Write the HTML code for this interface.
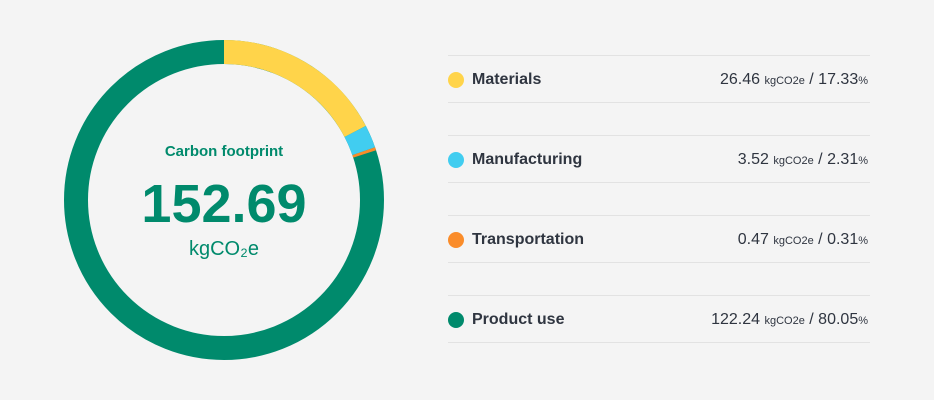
<!DOCTYPE html>
<html><head><meta charset="utf-8"><style>
html,body{margin:0;padding:0;background:#f4f4f4;width:934px;height:400px;overflow:hidden;font-family:"Liberation Sans",sans-serif;}
.center{position:absolute;left:124px;width:200px;text-align:center;color:#008a6c;}
.row{position:absolute;left:448px;width:422px;height:48px;border-top:1px solid #e2e2e2;border-bottom:1px solid #e2e2e2;box-sizing:border-box;display:flex;align-items:center;color:#2f3540;padding-top:2px;}
.dot{width:16px;height:16px;border-radius:50%;margin-right:8px;}
.lab{font-weight:bold;font-size:16px;flex:1;}
.val{font-size:16px;padding-right:2px;}
.val small{font-size:11px;}
</style></head><body>
<svg width="934" height="400" style="position:absolute;left:0;top:0">
<g transform="rotate(-90 224 200)" fill="none" stroke-width="24">
<circle cx="224" cy="200" r="148" stroke="#008a6c"/>
<circle cx="224" cy="200" r="148" stroke="#ffd44a" stroke-dasharray="161.15 1000"/>
<circle cx="224" cy="200" r="148" stroke="#41cdf0" stroke-dasharray="0 161.15 21.48 1000"/>
<circle cx="224" cy="200" r="148" stroke="#fa8c2a" stroke-dasharray="0 182.63 2.9 1000"/>
</g>
</svg>
<div class="center" style="top:143px;font-size:15px;font-weight:bold;">Carbon footprint</div>
<div class="center" style="top:174px;font-size:54px;font-weight:bold;line-height:60px;">152.69</div>
<div class="center" style="top:238px;font-size:20px;">kgCO₂e</div>

<div class="row" style="top:55px"><div class="dot" style="background:#ffd44a"></div><div class="lab">Materials</div><div class="val">26.46 <small>kgCO2e</small> / 17.33<small>%</small></div></div>
<div class="row" style="top:135px"><div class="dot" style="background:#41cdf0"></div><div class="lab">Manufacturing</div><div class="val">3.52 <small>kgCO2e</small> / 2.31<small>%</small></div></div>
<div class="row" style="top:215px"><div class="dot" style="background:#fa8c2a"></div><div class="lab">Transportation</div><div class="val">0.47 <small>kgCO2e</small> / 0.31<small>%</small></div></div>
<div class="row" style="top:295px"><div class="dot" style="background:#008a6c"></div><div class="lab">Product use</div><div class="val">122.24 <small>kgCO2e</small> / 80.05<small>%</small></div></div>
</body></html>
